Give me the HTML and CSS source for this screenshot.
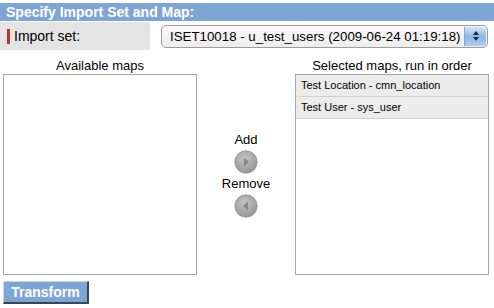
FILE: index.html
```html
<!DOCTYPE html>
<html>
<head>
<meta charset="utf-8">
<link rel="stylesheet" href="styles.css">
</head>
<body>
<div class="header">Specify Import Set and Map:</div>
<div class="row">
  <div class="label"><span class="marker"></span>Import set:</div>
  <div class="select">
    <span class="select-text">ISET10018 - u_test_users (2009-06-24 01:19:18)</span>
    <span class="select-btn">
      <svg width="10" height="14" viewBox="0 0 10 14"><path d="M5 2 L8 6 L2 6 Z" fill="#1c2a40"/><path d="M5 12 L8 8 L2 8 Z" fill="#1c2a40"/></svg>
    </span>
  </div>
</div>
<div class="main">
  <div class="col">
    <div class="heading">Available maps</div>
    <div class="box"></div>
  </div>
  <div class="mid">
    <div class="mid-label">Add</div>
    <svg class="circ" width="24" height="24" viewBox="0 0 24 24">
      <defs><radialGradient id="g1" cx="45%" cy="35%" r="65%"><stop offset="0" stop-color="#c4c4c4"/><stop offset="1" stop-color="#979797"/></radialGradient></defs>
      <circle cx="12" cy="12" r="11.2" fill="url(#g1)" stroke="#969696" stroke-width="0.8"/>
      <path d="M10 7.5 L15 12 L10 16.5 Z" fill="#858585"/>
    </svg>
    <div class="mid-label">Remove</div>
    <svg class="circ" width="24" height="24" viewBox="0 0 24 24">
      <defs><radialGradient id="g2" cx="45%" cy="35%" r="65%"><stop offset="0" stop-color="#c4c4c4"/><stop offset="1" stop-color="#979797"/></radialGradient></defs>
      <circle cx="12" cy="12" r="11.2" fill="url(#g2)" stroke="#969696" stroke-width="0.8"/>
      <path d="M14 7.5 L9 12 L14 16.5 Z" fill="#858585"/>
    </svg>
  </div>
  <div class="col">
    <div class="heading">Selected maps, run in order</div>
    <div class="box">
      <div class="item">Test Location - cmn_location</div>
      <div class="item">Test User - sys_user</div>
    </div>
  </div>
</div>
<div class="footer"><span class="btn">Transform</span></div>
</body>
</html>
```

FILE: styles.css
```css
html, body { margin: 0; padding: 0; background: #fff; }
body { font-family: "Liberation Sans", Arial, sans-serif; color: #000; width: 494px; padding-top: 3px; }
.header { height: 18px; line-height: 18px; background: #7ea6d4; color: #fff; font-weight: bold; font-size: 14px; padding-left: 6px; }
.row { display: flex; align-items: center; margin-top: 1px; height: 28px; }
.label { width: 150px; height: 28px; background: #e4e4e4; display: flex; align-items: center; font-size: 14px; }
.marker { width: 3px; height: 15px; background: #b8352a; margin-left: 7px; margin-right: 4px; }
.select { margin-left: 11px; width: 325px; height: 21px; border: 1px solid #9c9c9c; border-radius: 5px; background: linear-gradient(#fafafa, #ededed); display: flex; align-items: center; box-sizing: content-box; }
.select-text { font-size: 13.3px; padding-left: 8px; flex: 1; white-space: nowrap; overflow: hidden; }
.select-btn { flex-shrink: 0; width: 21px; height: 19px; margin-right: 1px; border-radius: 0 4px 4px 0; background: linear-gradient(#d5e6f8, #8db8e6 50%, #a9cdf1); border-left: 1px solid #8aa7c8; display: flex; align-items: center; justify-content: center; }
.main { display: flex; padding-left: 3px; margin-top: 8px; }
.col { width: 194px; display: flex; flex-direction: column; }
.heading { height: 16px; line-height: 16px; font-size: 13px; text-align: center; }
.box { height: 199px; border: 1px solid #a6a6a6; background: #fff; }
.mid { width: 98px; display: flex; flex-direction: column; align-items: center; padding-top: 74px; }
.mid-label { font-size: 13px; line-height: 15px; }
.circ { display: block; margin: 3px 0 2px; }
.item { height: 21px; line-height: 20px; background: #ececec; border-bottom: 1px solid #d2d2d2; font-size: 11px; padding-left: 5px; }
.footer { padding-left: 3px; margin-top: 6px; }
.btn { display: inline-block; width: 83px; height: 20px; line-height: 20px; background: #7ea6d4; color: #fff; font-weight: bold; font-size: 14px; text-align: center; border-top: 1px solid #c9d6e4; border-left: 1px solid #c9d6e4; border-right: 2px solid #3c4652; border-bottom: 2px solid #3c4652; }
```
